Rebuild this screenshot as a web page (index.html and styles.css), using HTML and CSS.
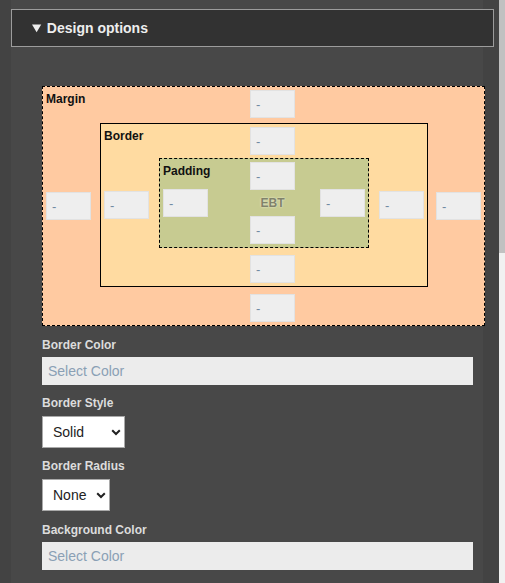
FILE: index.html
```html
<!DOCTYPE html>
<html lang="en">
<head>
<meta charset="utf-8">
<title>Design options</title>
<link rel="stylesheet" href="styles.css">
</head>
<body>
<div class="page">
  <div class="content">
    <div class="panel">
      <details class="design" open>
        <summary class="design-title">Design options</summary>
        <div class="design-body">
          <div class="bm bm-margin">
            <span class="bm-label">Margin</span>
            <input class="bm-input bm-top" placeholder="-">
            <input class="bm-input bm-left" placeholder="-">
            <input class="bm-input bm-right" placeholder="-">
            <div class="bm bm-border">
              <span class="bm-label">Border</span>
              <input class="bm-input bm-top" placeholder="-">
              <input class="bm-input bm-left" placeholder="-">
              <input class="bm-input bm-right" placeholder="-">
              <div class="bm bm-padding">
                <span class="bm-label">Padding</span>
                <input class="bm-input bm-top" placeholder="-">
                <input class="bm-input bm-left" placeholder="-">
                <input class="bm-input bm-right" placeholder="-">
                <span class="bm-core">EBT</span>
                <input class="bm-input bm-bottom" placeholder="-">
              </div>
              <input class="bm-input bm-bottom" placeholder="-">
            </div>
            <input class="bm-input bm-bottom" placeholder="-">
          </div>

          <div class="field field-first">
            <label class="field-label">Border Color</label>
            <input class="color-input" placeholder="Select Color">
          </div>
          <div class="field">
            <label class="field-label">Border Style</label>
            <div class="select-wrap select-style">
              <select class="select">
                <option>Solid</option>
                <option>Dashed</option>
                <option>Dotted</option>
                <option>Double</option>
              </select>
              <svg class="chev" width="10" height="7" viewBox="0 0 10 7"><path d="M1.2 1.2 L5 5 L8.8 1.2" fill="none" stroke="#222" stroke-width="2"/></svg>
            </div>
          </div>
          <div class="field">
            <label class="field-label">Border Radius</label>
            <div class="select-wrap select-radius">
              <select class="select">
                <option>None</option>
                <option>2px</option>
                <option>4px</option>
              </select>
              <svg class="chev" width="10" height="7" viewBox="0 0 10 7"><path d="M1.2 1.2 L5 5 L8.8 1.2" fill="none" stroke="#222" stroke-width="2"/></svg>
            </div>
          </div>
          <div class="field field-last">
            <label class="field-label">Background Color</label>
            <input class="color-input" placeholder="Select Color">
          </div>
        </div>
      </details>
    </div>
  </div>
  <div class="scrollbar"><div class="scroll-thumb"></div></div>
</div>
</body>
</html>
```
FILE: styles.css
```css
html, body {
  margin: 0;
  padding: 0;
}
body {
  background: #434343;
  font-family: "Liberation Sans", Arial, sans-serif;
  height: 583px;
  overflow: hidden;
}
.page {
  display: flex;
  height: 583px;
}
.content {
  flex: 1;
  padding-left: 11px;
}
.panel {
  width: 472px;
  height: 100%;
  background: #484848;
  padding-top: 9px;
  box-sizing: border-box;
}
.scrollbar {
  width: 6px;
  background: #f1f1f1;
}
.scroll-thumb {
  height: 253px;
  background: #c1c1c1;
}

/* header */
.design-title {
  width: 483px;
  box-sizing: border-box;
  border: 1px solid #9c9c9c;
  background: #323232;
  color: #eeeeee;
  font-weight: bold;
  font-size: 14px;
  line-height: 16px;
  padding: 10px 20px;
  cursor: pointer;
}
.design-body {
  padding: 39px 0 0 31px;
}

/* box model */
.bm {
  display: grid;
  padding: 3px;
  box-sizing: border-box;
}
.bm-margin {
  width: 443px;
  border: 1px dashed #000;
  background: #ffcaa1;
  grid-template-columns: 45px 9px 1fr 8px 45px;
  grid-template-rows: 28px 5px auto 7px 28px;
}
.bm-border {
  grid-column: 3;
  grid-row: 3;
  border: 1px solid #000;
  background: #ffdba1;
  grid-template-columns: 45px 10px 1fr 10px 45px;
  grid-template-rows: 28px 3px auto 7px 28px;
}
.bm-padding {
  grid-column: 3;
  grid-row: 3;
  border: 1px dashed #000;
  background: #c7cb91;
  grid-template-columns: 45px 1fr 45px;
  grid-template-rows: 28px 26px 28px;
}
.bm-label {
  grid-column: 1;
  grid-row: 1;
  align-self: start;
  justify-self: start;
  margin-top: 2px;
  white-space: nowrap;
  font-weight: bold;
  font-size: 12px;
  line-height: 14px;
  color: #111;
}
.bm-input {
  width: 45px;
  height: 28px;
  box-sizing: border-box;
  margin: 0;
  padding: 0 0 0 5px;
  border: 1px solid #e2e2e2;
  background: #eeeeee;
  font-family: "Liberation Sans", Arial, sans-serif;
  font-size: 13px;
  color: #333;
  outline: none;
}
.bm-input::placeholder {
  color: #6f8aa2;
}
.bm-top {
  grid-column: 3;
  grid-row: 1;
  justify-self: center;
  margin-left: 17px;
}
.bm-bottom {
  grid-column: 3;
  grid-row: 5;
  justify-self: center;
  margin-left: 17px;
}
.bm-left {
  grid-column: 1;
  grid-row: 1 / -1;
  align-self: center;
}
.bm-right {
  grid-column: 5;
  grid-row: 1 / -1;
  align-self: center;
}
.bm-padding .bm-top,
.bm-padding .bm-bottom {
  grid-column: 2;
}
.bm-padding .bm-bottom {
  grid-row: 3;
}
.bm-padding .bm-right {
  grid-column: 3;
}
.bm-core {
  grid-column: 2;
  grid-row: 2;
  align-self: center;
  justify-self: center;
  margin-left: 17px;
  font-weight: bold;
  font-size: 12px;
  line-height: 14px;
  color: #80826a;
  text-shadow: 0 0 2px #f4f4e0;
}

/* fields */
.field {
  width: 431px;
  margin-top: 11px;
  display: flex;
  flex-direction: column;
  align-items: flex-start;
}
.field-first {
  margin-top: 12px;
}
.field-last {
  margin-top: 12px;
}
.field-label {
  font-weight: bold;
  font-size: 12px;
  line-height: 14px;
  color: #dcdcdc;
  margin-bottom: 5px;
}
.color-input {
  width: 431px;
  height: 28px;
  box-sizing: border-box;
  margin: 0;
  border: none;
  background: #ececec;
  padding: 0 0 0 6px;
  font-family: "Liberation Sans", Arial, sans-serif;
  font-size: 14px;
  color: #333;
  outline: none;
}
.color-input::placeholder {
  color: #8aa0b5;
}
.select-wrap {
  position: relative;
  margin-top: 1px;
  height: 32px;
}
.select-style {
  width: 83px;
}
.select-radius {
  width: 68px;
}
.select {
  -webkit-appearance: none;
  appearance: none;
  width: 100%;
  height: 32px;
  box-sizing: border-box;
  margin: 0;
  border: 1px solid #a9a9a9;
  border-radius: 0;
  background: #ffffff;
  padding: 0 0 0 10px;
  font-family: "Liberation Sans", Arial, sans-serif;
  font-size: 14px;
  color: #222;
  outline: none;
}
.chev {
  position: absolute;
  right: 4px;
  top: 13px;
  pointer-events: none;
}
```
